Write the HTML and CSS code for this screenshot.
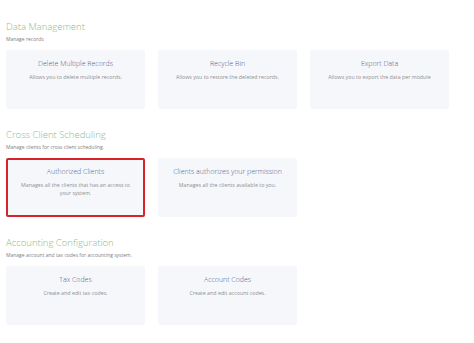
FILE: index.html
```html
<!DOCTYPE html>
<html lang="en">
<head>
    <meta charset="UTF-8">
    <meta name="viewport" content="width=device-width, initial-scale=1.0">
    <title>Settings</title>
    <link rel="stylesheet" href="styles.css">
</head>
<body>
    <div class="page">
        <section class="group">
            <h2>Data Management</h2>
            <p class="sub">Manage records</p>
            <div class="cards">
                <div class="card">
                    <h3>Delete Multiple Records</h3>
                    <p>Allows you to delete multiple records.</p>
                </div>
                <div class="card">
                    <h3>Recycle Bin</h3>
                    <p>Allows you to restore the deleted records.</p>
                </div>
                <div class="card">
                    <h3>Export Data</h3>
                    <p>Allows you to export the data per module</p>
                </div>
            </div>
        </section>

        <section class="group">
            <h2>Cross Client Scheduling</h2>
            <p class="sub">Manage clients for cross client scheduling.</p>
            <div class="cards">
                <div class="card selected">
                    <h3>Authorized Clients</h3>
                    <p>Manages all the clients that has an access to your system.</p>
                </div>
                <div class="card">
                    <h3>Clients authorizes your permission</h3>
                    <p>Manages all the clients available to you.</p>
                </div>
            </div>
        </section>

        <section class="group">
            <h2>Accounting Configuration</h2>
            <p class="sub">Manage account and tax codes for accounting system.</p>
            <div class="cards">
                <div class="card">
                    <h3>Tax Codes</h3>
                    <p>Create and edit tax codes.</p>
                </div>
                <div class="card">
                    <h3>Account Codes</h3>
                    <p>Create and edit account codes.</p>
                </div>
            </div>
        </section>
    </div>
</body>
</html>
```

FILE: styles.css
```css
body {
    margin: 0;
    background: #ffffff;
    font-family: 'Open Sans', sans-serif;
}

.page {
    padding: 20px 25px 0 6px;
}

.group {
    margin-bottom: 19px;
}

.group h2 {
    margin: 0;
    font-size: 9.5px;
    font-weight: 300;
    line-height: 13px;
    color: #88c088;
}

.sub {
    margin: 2px 0 7px 0;
    font-size: 5px;
    line-height: 8px;
    color: #7d7d7d;
}

.cards {
    display: grid;
    grid-template-columns: repeat(3, 139px);
    gap: 13px;
}

.card {
    box-sizing: border-box;
    height: 59px;
    padding: 8px 4px 0 4px;
    background: #f6f7fb;
    border-radius: 2px;
    text-align: center;
}

.card h3 {
    margin: 0;
    font-size: 7px;
    font-weight: 300;
    line-height: 11px;
    color: #4f5f95;
}

.card p {
    margin: 4px 8px 0 8px;
    font-size: 5.3px;
    line-height: 8px;
    color: #8f8f8f;
}

.card.selected {
    border: 2px solid #d8232a;
    padding-top: 6px;
}
```
